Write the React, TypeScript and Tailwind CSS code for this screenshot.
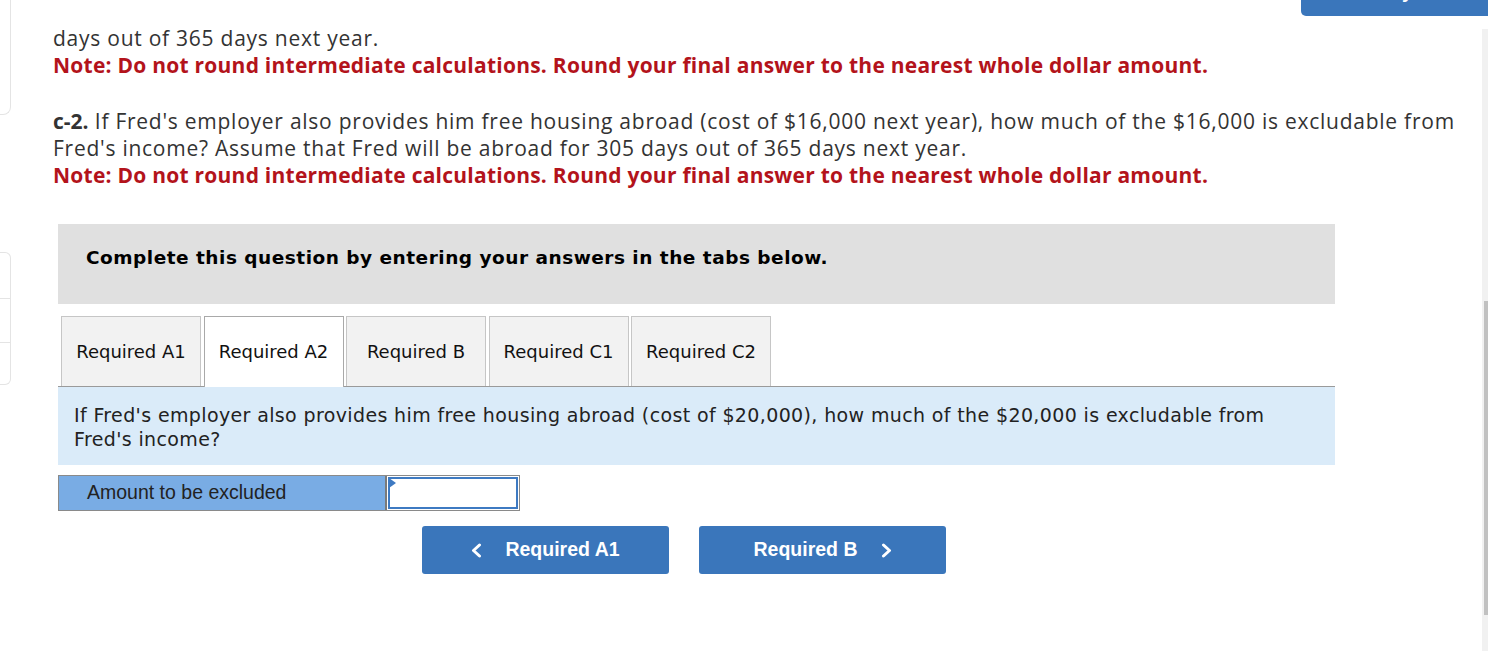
const tabs = ['Required A1', 'Required A2', 'Required B', 'Required C1', 'Required C2'];

function Chevron({ dir }: { dir: 'left' | 'right' }) {
  return (
    <svg width="11" height="15" viewBox="0 0 11 15" fill="none" stroke="white" strokeWidth="3" strokeLinecap="round" strokeLinejoin="round">
      {dir === 'left' ? <polyline points="8.5,2 2.5,7.5 8.5,13" /> : <polyline points="2.5,2 8.5,7.5 2.5,13" />}
    </svg>
  );
}

export default function App() {
  return (
    <div className="relative flex w-[1488px] h-[651px] overflow-hidden bg-white text-[#333]">
      {/* left rail fragments */}
      <div className="w-[11px] shrink-0">
        <div className="h-[115px] border-r border-b border-[#e4e4e4] rounded-br-[8px]" />
        <div className="mt-[137px] border border-l-0 border-[#e4e4e4] rounded-r-[6px]">
          <div className="h-[46px] border-b border-[#e4e4e4]" />
          <div className="h-[44px] border-b border-[#e4e4e4]" />
          <div className="h-[41px]" />
        </div>
      </div>

      {/* main column */}
      <div className="ml-[42px] w-[1420px] pt-[25px]">
        <div className="text-[21px] leading-[27px] font-['Open_Sans',sans-serif]">
          <p className="tracking-[0.75px]">days out of 365 days next year.</p>
          <p className="font-bold tracking-[0.24px] text-[#b3131b]">
            Note: Do not round intermediate calculations. Round your final answer to the nearest whole dollar amount.
          </p>
        </div>

        <div className="mt-[29px] text-[21px] leading-[27px] font-['Open_Sans',sans-serif]">
          <p className="tracking-[0.75px]">
            <span className="font-bold tracking-normal">c-2.</span> If Fred's employer also provides him free housing abroad
            (cost of $16,000 next year), how much of the $16,000 is excludable from
            <br />
            Fred's income? Assume that Fred will be abroad for 305 days out of 365 days next year.
          </p>
          <p className="font-bold tracking-[0.24px] text-[#b3131b]">
            Note: Do not round intermediate calculations. Round your final answer to the nearest whole dollar amount.
          </p>
        </div>

        <div className="ml-[5px] w-[1277px] mt-[35px] font-['DejaVu_Sans',Verdana,sans-serif]">
          <div className="h-[80px] bg-[#e0e0e0] pl-[28px] pt-[22px]">
            <p className="text-[18.5px] leading-[24px] font-bold tracking-[0.5px] text-black">
              Complete this question by entering your answers in the tabs below.
            </p>
          </div>

          {/* tabs */}
          <div className="mt-[12px] flex items-end gap-[2.5px] pl-[3px] border-b border-[#9a9a9a]">
            {tabs.map((t, i) =>
              i === 1 ? (
                <div
                  key={t}
                  className="-mb-px h-[71px] w-[140px] flex items-center justify-center pb-px bg-white border border-b-0 border-[#a9a9a9] text-[18px] text-[#111]"
                >
                  {t}
                </div>
              ) : (
                <div
                  key={t}
                  className="h-[70px] w-[140px] flex items-center justify-center bg-[#f2f2f2] border border-b-0 border-[#c6c6c6] text-[18px] text-[#111]"
                >
                  {t}
                </div>
              )
            )}
          </div>

          <div className="h-[78px] bg-[#daebf9] pl-[16px] pt-[16px] text-[19px] leading-[24px] tracking-[0.37px] text-[#222]">
            <p>
              If Fred's employer also provides him free housing abroad (cost of $20,000), how much of the $20,000 is excludable from
              <br />
              Fred's income?
            </p>
          </div>

          {/* answer row */}
          <div className="mt-[10px] flex w-[462px] h-[36px] border border-[#8a8a8a] font-['Liberation_Sans',Arial,sans-serif]">
            <div className="w-[328px] bg-[#79ace4] pl-[28px] flex items-center text-[19.5px] text-[#222] border-r-2 border-[#7a7a7a]">
              Amount to be excluded
            </div>
            <div className="relative flex-1 bg-white border-2 border-[#3e7ac2] m-[1px]">
              <div className="absolute -left-[1px] -top-[1px] w-0 h-0 border-t-[5px] border-b-[5px] border-l-[7px] border-t-transparent border-b-transparent border-l-[#3e7ac2]" />
            </div>
          </div>

          {/* nav buttons */}
          <div className="mt-[15px] ml-[364px] flex gap-[30px] font-['Liberation_Sans',Arial,sans-serif]">
            <button className="w-[247px] h-[48px] rounded-[3px] bg-[#3a76bb] text-white text-[19.5px] font-bold flex items-center justify-center gap-[23px]">
              <Chevron dir="left" />
              <span>Required A1</span>
            </button>
            <button className="w-[247px] h-[48px] rounded-[3px] bg-[#3a76bb] text-white text-[19.5px] font-bold flex items-center justify-center gap-[23px]">
              <span>Required B</span>
              <Chevron dir="right" />
            </button>
          </div>
        </div>
      </div>

      {/* scrollbar */}
      <div className="ml-auto w-[6px] shrink-0 mt-[29px] bg-[#f1f1f1] flex justify-end">
        <div className="mt-[272px] w-[4px] h-[314px] bg-[#c1c1c1]" />
      </div>

      {/* top-right button peeking in */}
      <div className="absolute top-0 right-0 w-[187px] h-[16px] overflow-hidden rounded-bl-[5px] bg-[#3a76bb]">
        <div className="-mt-[22px] h-[36px] pr-[4px] flex items-start justify-center text-white text-[19px] leading-[28px] font-bold font-['Liberation_Sans',Arial,sans-serif]">
          Check my work
        </div>
      </div>
    </div>
  );
}
